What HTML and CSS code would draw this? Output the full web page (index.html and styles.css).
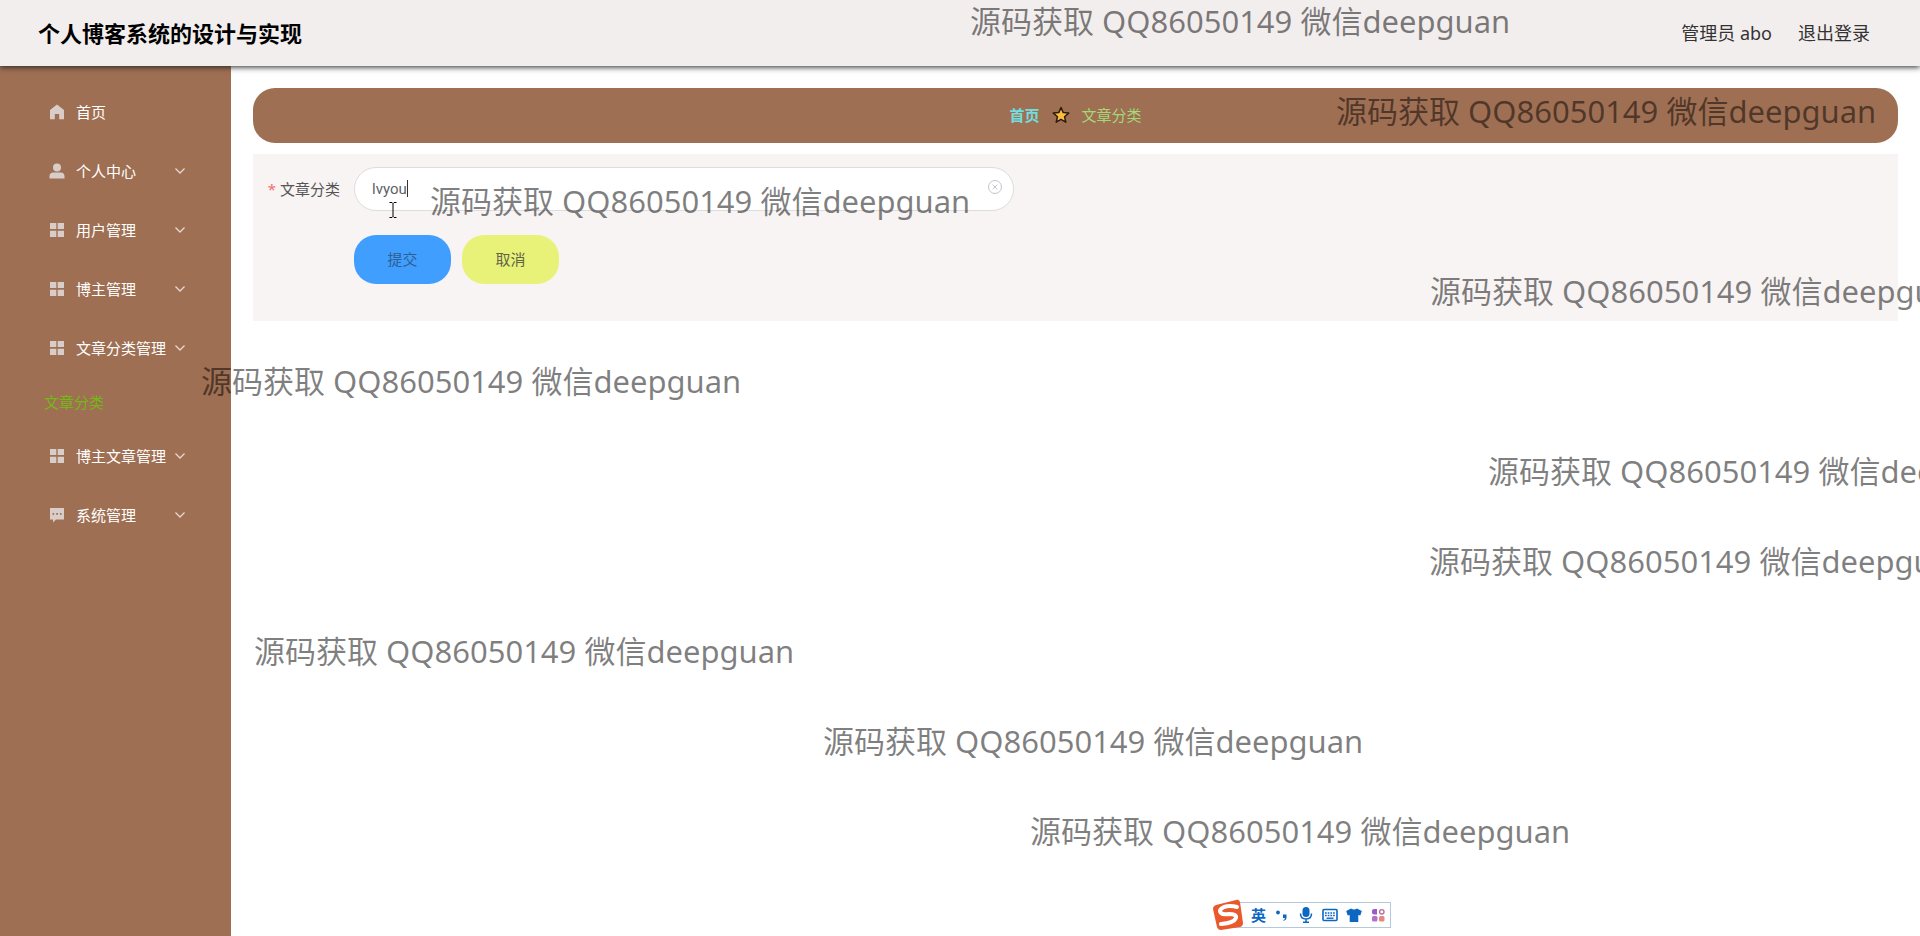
FILE: index.html
```html
<!DOCTYPE html>
<html lang="zh-CN">
<head>
    <meta charset="UTF-8">
    <meta name="viewport" content="width=device-width, initial-scale=1.0">
    <title>个人博客系统的设计与实现</title>
    <link rel="stylesheet" href="styles.css">
</head>
<body>
    <svg class="sprite" aria-hidden="true">
        <symbol id="icon-home" viewBox="0 0 16 16"><path d="M8 .5 1 6v9.300h4.800V10h4.400v5.300H15V6z"/></symbol>
        <symbol id="icon-user" viewBox="0 0 16 16"><circle cx="8" cy="4.500" r="4"/><path d="M.5 15.500v-2q0-4 4-4h7q4 0 4 4v2z"/></symbol>
        <symbol id="icon-menu" viewBox="0 0 16 16"><path d="M1 1h6.300v6H1zM8.700 1H15v6H8.700zM1 8.700h6.300V15H1zM8.700 8.700H15V15H8.700z"/></symbol>
        <symbol id="icon-chat" viewBox="0 0 16 16"><path fill-rule="evenodd" d="M1 1h14v11.500H7L4 15.500v-3H1zM3.500 6v1.700h1.700V6zm3.700 0v1.700h1.700V6zm3.700 0v1.700h1.700V6z"/></symbol>
        <symbol id="icon-arrow" viewBox="0 0 12 12"><path d="M1.500 3.500 6 8 10.500 3.500" fill="none" stroke="currentColor" stroke-width="1.300"/></symbol>
    </svg>

    <header class="header">
        <h1 class="title">个人博客系统的设计与实现</h1>
        <div class="user">
            <span>管理员 abo</span>
            <a href="#">退出登录</a>
        </div>
    </header>

    <div class="container">
        <nav class="sidebar">
            <a class="menu-item" href="#"><svg class="icon"><use href="#icon-home"/></svg><span>首页</span></a>
            <a class="menu-item" href="#"><svg class="icon"><use href="#icon-user"/></svg><span>个人中心</span><svg class="arrow"><use href="#icon-arrow"/></svg></a>
            <a class="menu-item" href="#"><svg class="icon"><use href="#icon-menu"/></svg><span>用户管理</span><svg class="arrow"><use href="#icon-arrow"/></svg></a>
            <a class="menu-item" href="#"><svg class="icon"><use href="#icon-menu"/></svg><span>博主管理</span><svg class="arrow"><use href="#icon-arrow"/></svg></a>
            <a class="menu-item" href="#"><svg class="icon"><use href="#icon-menu"/></svg><span>文章分类管理</span><svg class="arrow"><use href="#icon-arrow"/></svg></a>
            <a class="submenu-item" href="#">文章分类</a>
            <a class="menu-item" href="#"><svg class="icon"><use href="#icon-menu"/></svg><span>博主文章管理</span><svg class="arrow"><use href="#icon-arrow"/></svg></a>
            <a class="menu-item" href="#"><svg class="icon"><use href="#icon-chat"/></svg><span>系统管理</span><svg class="arrow"><use href="#icon-arrow"/></svg></a>
        </nav>

        <main class="main">
            <div class="breadcrumb">
                <a href="#">首页</a>
                <svg class="star" viewBox="0 0 18 18"><path d="M9 1.500 11.200 6.600 16.700 7.100 12.500 10.700 13.800 16.200 9 13.300 4.200 16.200 5.500 10.700 1.300 7.100 6.800 6.600z" fill="#fcbf3c" stroke="#2b1a10" stroke-width="1.500" stroke-linejoin="round"/></svg>
                <span>文章分类</span>
            </div>

            <form class="form">
                <div class="form-row">
                    <label for="category"><span class="required">*</span> 文章分类</label>
                    <div class="field">
                        <input type="text" id="category" value="lvyou" autocomplete="off">
                        <span class="caret"></span>
                        <button type="button" class="clear" aria-label="清空">
                            <svg viewBox="0 0 16 16"><circle cx="8" cy="8" r="6.500"/><path d="M5.700 5.700l4.600 4.600M10.300 5.700l-4.600 4.600"/></svg>
                        </button>
                        <svg class="pointer" viewBox="0 0 8 16"><path d="M.5.5h2.500l1 1 1-1h2.500M4 1.500v13M.5 15.500h2.500l1-1 1 1h2.500"/></svg>
                    </div>
                </div>
                <div class="form-buttons">
                    <button type="button" class="btn submit">提交</button>
                    <button type="button" class="btn cancel">取消</button>
                </div>
            </form>
        </main>
    </div>

    <div class="watermarks">
        <p class="mark-1">源码获取 QQ86050149 微信deepguan</p>
        <p class="mark-2">源码获取 QQ86050149 微信deepguan</p>
        <p class="mark-3">源码获取 QQ86050149 微信deepguan</p>
        <p class="mark-4">源码获取 QQ86050149 微信deepguan</p>
        <p class="mark-5">源码获取 QQ86050149 微信deepguan</p>
        <p class="mark-6">源码获取 QQ86050149 微信deepguan</p>
        <p class="mark-7">源码获取 QQ86050149 微信deepguan</p>
        <p class="mark-8">源码获取 QQ86050149 微信deepguan</p>
        <p class="mark-9">源码获取 QQ86050149 微信deepguan</p>
        <p class="mark-10">源码获取 QQ86050149 微信deepguan</p>
    </div>

    <div class="ime">
        <svg class="ime-logo" viewBox="0 0 32 32">
            <path d="M4 6 24 1q3-1 4 2l3 21q0 3-3 4L9 31q-3 0-4-3L1 10q0-3 3-4z" fill="#e9592b"/>
            <path d="M25 8q-7-2-13 0-6 3-3 6 2 2 8 1 8 0 7 4-2 5-15 6" fill="none" stroke="#fff" stroke-width="4" stroke-linecap="round"/>
        </svg>
        <div class="ime-bar">
            <span>英</span>
            <svg viewBox="0 0 16 16"><circle cx="4" cy="5.500" r="1.900"/><path d="M9 7.500h3.500V11q0 2-3 3v-1q1.500-.7 1.500-2H9z"/></svg>
            <svg viewBox="0 0 16 16"><rect x="4.500" y="0" width="7" height="10" rx="3.500"/><path d="M2.500 6.500q0 5.500 5.500 5.500t5.500-5.500M8 12v3M5 15.200h6" fill="none" stroke="#0b67c2" stroke-width="1.500"/></svg>
            <svg viewBox="0 0 16 16"><rect x="1" y="2.500" width="14" height="11" rx="1" fill="none" stroke="#0b67c2" stroke-width="1.600"/><path d="M3 6h10M3 8.500h10" stroke="#0b67c2" stroke-width="1.600" stroke-dasharray="1.700 1"/><path d="M4.500 11.200h7" stroke="#0b67c2" stroke-width="1.400"/></svg>
            <svg viewBox="0 0 16 16"><path d="M5 1.500q3 2 6 0l4.800 2.500-1.500 4.500-2-.5V15H3.700V8l-2 .5L.2 4z"/></svg>
            <svg viewBox="0 0 16 16"><path d="M2 4q0-2 2-2h3v5.500H4q-2 0-2-2z" fill="#9a5cc9"/><circle cx="11.800" cy="4.800" r="2.200" fill="none" stroke="#bd6c9c" stroke-width="1.400"/><rect x="2" y="9" width="5.500" height="5.500" rx="1.500" fill="#b472c4"/><rect x="9" y="9" width="5.500" height="5.500" rx="1.500" fill="#e18a80"/></svg>
        </div>
    </div>
</body>
</html>
```
FILE: styles.css
```css
* {
    box-sizing: border-box;
}
body {
    font-family: "Noto Sans", "Noto Sans CJK SC", sans-serif;
    font-size: 15px;
    margin: 0;
    min-height: 100vh;
    display: flex;
    flex-direction: column;
    position: relative;
    overflow: hidden;
    background: #fff;
}
a {
    color: inherit;
    text-decoration: none;
}
.sprite {
    display: none;
}

/* header */
.header {
    height: 66px;
    padding: 0 50px 2px 38px;
    display: flex;
    align-items: center;
    justify-content: space-between;
    background: #f3eeee;
    box-shadow: 0 1px 6px #222;
    position: relative;
    z-index: 1;
}
.title {
    margin: 0;
    font-size: 22px;
    font-weight: bold;
    color: #000;
}
.user {
    display: flex;
    gap: 26px;
    font-size: 18px;
    color: #333;
}

/* sidebar */
.container {
    flex: 1;
    display: flex;
}
.sidebar {
    width: 231px;
    padding-top: 16px;
    background: #9f6f53;
    color: #fff;
}
.menu-item {
    display: flex;
    align-items: center;
    height: 59px;
    padding: 0 45px 0 49px;
}
.icon {
    width: 16px;
    height: 16px;
    margin-right: 11px;
    fill: #d9cdc9;
}
.arrow {
    width: 12px;
    height: 12px;
    margin-left: auto;
    color: #e6d8d0;
}
.submenu-item {
    display: flex;
    align-items: center;
    height: 49px;
    padding-left: 44px;
    color: #74b816;
}

/* content */
.main {
    flex: 1;
    padding: 22px;
}
.breadcrumb {
    height: 55px;
    padding-bottom: 2px;
    display: flex;
    align-items: center;
    justify-content: center;
    gap: 12px;
    border-radius: 22px;
    background: #9f6f53;
    color: #a3d977;
}
.breadcrumb a {
    font-weight: bold;
    color: #72dede;
}
.star {
    width: 18px;
    height: 18px;
}
.form {
    margin-top: 11px;
    padding: 13px 14px 37px;
    background: #f8f4f4;
}
.form-row {
    display: flex;
    align-items: center;
}
.form-row label {
    width: 87px;
    padding: 0 14px 2px 0;
    text-align: right;
    color: #555;
    white-space: nowrap;
}
.required {
    color: #f56c6c;
}
.field {
    flex: 0 1 660px;
    position: relative;
}
.field input {
    display: block;
    width: 100%;
    height: 44px;
    padding: 0 44px 0 17px;
    border: 1px solid #dedcdf;
    border-radius: 22px;
    outline: none;
    background: #fff;
    font-family: Roboto, "Noto Sans CJK SC", sans-serif;
    font-size: 15px;
    color: #606266;
}
.caret {
    position: absolute;
    left: 53px;
    top: 13px;
    width: 1px;
    height: 17px;
    background: #333;
}
.clear {
    position: absolute;
    right: 11px;
    top: 12px;
    width: 16px;
    height: 16px;
    padding: 0;
    border: 0;
    background: none;
}
.clear svg {
    display: block;
    fill: none;
    stroke: #c0c4cc;
}
.pointer {
    position: absolute;
    left: 35px;
    top: 35px;
    width: 8px;
    height: 16px;
    fill: none;
    stroke: #000;
}
.form-buttons {
    display: flex;
    gap: 11px;
    margin: 24px 0 0 87px;
}
.btn {
    width: 97px;
    height: 49px;
    padding: 0 0 2px;
    border: 0;
    border-radius: 22px;
    font-family: inherit;
    font-size: 15px;
}
.submit {
    background: #409eff;
    color: #2f5f94;
}
.cancel {
    background: #e8f278;
    color: #62644a;
}

/* watermark layer, one line every 90px */
.watermarks {
    position: absolute;
    top: -24px;
    left: 0;
    right: 0;
    z-index: 2;
    pointer-events: none;
    font-size: 31px;
    line-height: 90px;
    white-space: nowrap;
    color: rgba(0, 0, 0, 0.5);
}
.watermarks p {
    margin: 0;
}
.watermarks .mark-1 { margin-left: 970px; }
.watermarks .mark-2 { margin-left: 1336px; }
.watermarks .mark-3 { margin-left: 430px; }
.watermarks .mark-4 { margin-left: 1430px; }
.watermarks .mark-5 { margin-left: 201px; }
.watermarks .mark-6 { margin-left: 1488px; }
.watermarks .mark-7 { margin-left: 1429px; }
.watermarks .mark-8 { margin-left: 254px; }
.watermarks .mark-9 { margin-left: 823px; }
.watermarks .mark-10 { margin-left: 1030px; }

/* input method bar */
.ime {
    position: absolute;
    right: 529px;
    bottom: 5px;
    z-index: 3;
    display: flex;
    align-items: center;
}
.ime-logo {
    width: 32px;
    height: 32px;
    margin-right: -12px;
    position: relative;
}
.ime-bar {
    display: flex;
    align-items: center;
    gap: 8px;
    height: 26px;
    padding: 0 4px 0 18px;
    border: 1px solid #b5c9dc;
    background: #fff;
    color: #0b67c2;
    font-weight: bold;
    line-height: 24px;
}
.ime-bar svg {
    width: 16px;
    height: 16px;
    fill: #0b67c2;
}
```
